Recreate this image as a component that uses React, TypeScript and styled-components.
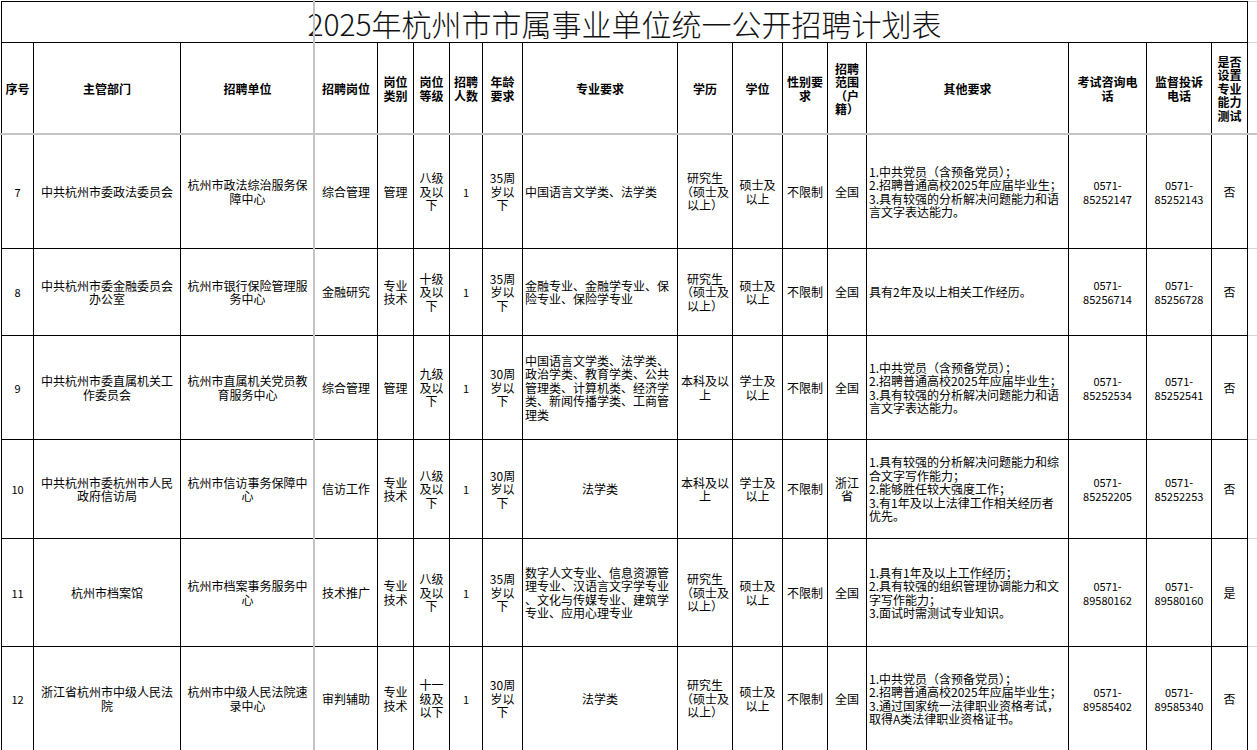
import React from "react";
import styled, { createGlobalStyle } from "styled-components";

type Align = "left" | "center";

interface Column {
	title: string;
	width: number;
	align: Align;
	numeric?: boolean;
}

interface Row {
	cells: string[];
	alignMajor?: Align;
}

const GlobalStyle = createGlobalStyle`
	html, body {
		margin: 0;
		padding: 0;
		background: #fff;
	}
	body {
		font-family: "Noto Sans CJK SC", "Noto Sans", sans-serif;
		color: #000;
	}
`;

const columns: Column[] = [
	{ title: "序号", width: 31, align: "center", numeric: true },
	{ title: "主管部门", width: 146, align: "center" },
	{ title: "招聘单位", width: 133, align: "center" },
	{ title: "招聘岗位", width: 62, align: "center" },
	{ title: "岗位\n类别", width: 35, align: "center" },
	{ title: "岗位\n等级", width: 35, align: "center" },
	{ title: "招聘\n人数", width: 32, align: "center", numeric: true },
	{ title: "年龄\n要求", width: 39, align: "center" },
	{ title: "专业要求", width: 154, align: "left" },
	{ title: "学历", width: 54, align: "center" },
	{ title: "学位", width: 49, align: "center" },
	{ title: "性别要\n求", width: 44, align: "center" },
	{ title: "招聘\n范围\n（户\n籍）", width: 38, align: "center" },
	{ title: "其他要求", width: 201, align: "left" },
	{ title: "考试咨询电\n话", width: 77, align: "center", numeric: true },
	{ title: "监督投诉\n电话", width: 64, align: "center", numeric: true },
	{ title: "是否\n设置\n专业\n能力\n测试", width: 35, align: "center" },
];

const rowHeights = [40, 91, 113, 86, 103, 98, 107, 103];

const partyReq = "1.中共党员（含预备党员）；\n2.招聘普通高校2025年应届毕业生；";

const rows: Row[] = [
	{
		cells: [
			"7",
			"中共杭州市委政法委员会",
			"杭州市政法综治服务保\n障中心",
			"综合管理",
			"管理",
			"八级\n及以\n下",
			"1",
			"35周\n岁以\n下",
			"中国语言文学类、法学类",
			"研究生\n（硕士及\n以上）",
			"硕士及\n以上",
			"不限制",
			"全国",
			`${partyReq}\n3.具有较强的分析解决问题能力和语\n言文字表达能力。`,
			"0571-\n85252147",
			"0571-\n85252143",
			"否",
		],
	},
	{
		cells: [
			"8",
			"中共杭州市委金融委员会\n办公室",
			"杭州市银行保险管理服\n务中心",
			"金融研究",
			"专业\n技术",
			"十级\n及以\n下",
			"1",
			"35周\n岁以\n下",
			"金融专业、金融学专业、保\n险专业、保险学专业",
			"研究生\n（硕士及\n以上）",
			"硕士及\n以上",
			"不限制",
			"全国",
			"具有2年及以上相关工作经历。",
			"0571-\n85256714",
			"0571-\n85256728",
			"否",
		],
	},
	{
		cells: [
			"9",
			"中共杭州市委直属机关工\n作委员会",
			"杭州市直属机关党员教\n育服务中心",
			"综合管理",
			"管理",
			"九级\n及以\n下",
			"1",
			"30周\n岁以\n下",
			"中国语言文学类、法学类、\n政治学类、教育学类、公共\n管理类、计算机类、经济学\n类、新闻传播学类、工商管\n理类",
			"本科及以\n上",
			"学士及\n以上",
			"不限制",
			"全国",
			`${partyReq}\n3.具有较强的分析解决问题能力和语\n言文字表达能力。`,
			"0571-\n85252534",
			"0571-\n85252541",
			"否",
		],
	},
	{
		alignMajor: "center",
		cells: [
			"10",
			"中共杭州市委杭州市人民\n政府信访局",
			"杭州市信访事务保障中\n心",
			"信访工作",
			"专业\n技术",
			"八级\n及以\n下",
			"1",
			"30周\n岁以\n下",
			"法学类",
			"本科及以\n上",
			"学士及\n以上",
			"不限制",
			"浙江\n省",
			"1.具有较强的分析解决问题能力和综\n合文字写作能力；\n2.能够胜任较大强度工作；\n3.有1年及以上法律工作相关经历者\n优先。",
			"0571-\n85252205",
			"0571-\n85252253",
			"否",
		],
	},
	{
		cells: [
			"11",
			"杭州市档案馆",
			"杭州市档案事务服务中\n心",
			"技术推广",
			"专业\n技术",
			"八级\n及以\n下",
			"1",
			"35周\n岁以\n下",
			"数字人文专业、信息资源管\n理专业、汉语言文字学专业\n、文化与传媒专业、建筑学\n专业、应用心理专业",
			"研究生\n（硕士及\n以上）",
			"硕士及\n以上",
			"不限制",
			"全国",
			"1.具有1年及以上工作经历；\n2.具有较强的组织管理协调能力和文\n字写作能力；\n3.面试时需测试专业知识。",
			"0571-\n89580162",
			"0571-\n89580160",
			"是",
		],
	},
	{
		alignMajor: "center",
		cells: [
			"12",
			"浙江省杭州市中级人民法\n院",
			"杭州市中级人民法院速\n录中心",
			"审判辅助",
			"专业\n技术",
			"十一\n级及\n以下",
			"1",
			"30周\n岁以\n下",
			"法学类",
			"研究生\n（硕士及\n以上）",
			"硕士及\n以上",
			"不限制",
			"全国",
			`${partyReq}\n3.通过国家统一法律职业资格考试，\n取得A类法律职业资格证书。`,
			"0571-\n89585402",
			"0571-\n89585340",
			"否",
		],
	},
];

const Page = styled.div`
	position: relative;
	display: flex;
	align-items: flex-start;
	padding: 1px 0 0 1px;
	height: 750px;
	overflow: hidden;
`;

const Sheet = styled.div`
	display: grid;
	grid-template-columns: ${columns.map((c) => `${c.width}px`).join(" ")};
	grid-template-rows: ${rowHeights.map((h) => `${h}px`).join(" ")};
	gap: 1px;
	padding: 1px;
	background: #000;
	flex: none;
`;

const Spare = styled.div`
	flex: 1;
	display: grid;
	grid-template-rows: ${rowHeights.map((h) => `${h}px`).join(" ")};
	row-gap: 1px;
	padding: 1px 0;
	background: #d4d4d4;
`;

const SpareCell = styled.div`
	background: #fff;
`;

const TitleCell = styled.div`
	grid-column: 1 / -1;
	background: #fff;
	display: flex;
	align-items: center;
	justify-content: center;
	font-size: 30px;
	font-weight: 300;
	color: #111;
	line-height: 1;
	padding-top: 1px;
`;

const BaseCell = styled.div<{ $align: Align }>`
	background: #fff;
	display: flex;
	align-items: center;
	justify-content: ${(p) => (p.$align === "left" ? "flex-start" : "center")};
	text-align: ${(p) => p.$align};
	white-space: pre;
	overflow: hidden;
	font-size: 12px;
	line-height: 13.5px;
	padding: 0 ${(p) => (p.$align === "left" ? "1px 0 2px" : "1px")};
`;

const HeadCell = styled(BaseCell)`
	font-weight: 700;
	justify-content: center;
	text-align: center;
`;

const BodyCell = styled(BaseCell)<{ $numeric?: boolean }>`
	font-size: ${(p) => (p.$numeric ? "11px" : "12px")};
	line-height: ${(p) => (p.$numeric ? "14px" : "13.5px")};
`;

const FreezeLine = styled.div<{ $axis: "x" | "y" }>`
	position: absolute;
	background: #c4c4c4;
	${(p) =>
		p.$axis === "x"
			? "left: 0; right: 0; top: 133px; height: 2px;"
			: "top: 0; bottom: 0; left: 313px; width: 2px;"}
`;

const App = () => {
	return (
		<>
			<GlobalStyle />
			<Page>
				<Sheet>
					<TitleCell>2025年杭州市市属事业单位统一公开招聘计划表</TitleCell>
					{columns.map((col) => (
						<HeadCell key={col.title} $align="center">
							{col.title}
						</HeadCell>
					))}
					{rows.map((row) =>
						row.cells.map((text, i) => {
							const col = columns[i];
							const align = i === 8 && row.alignMajor ? row.alignMajor : col.align;
							return (
								<BodyCell key={`${row.cells[0]}-${i}`} $align={align} $numeric={col.numeric}>
									{text}
								</BodyCell>
							);
						})
					)}
				</Sheet>
				<Spare>
					{rowHeights.map((h, i) => (
						<SpareCell key={i} />
					))}
				</Spare>
				<FreezeLine $axis="x" />
				<FreezeLine $axis="y" />
			</Page>
		</>
	);
};

export default App;
